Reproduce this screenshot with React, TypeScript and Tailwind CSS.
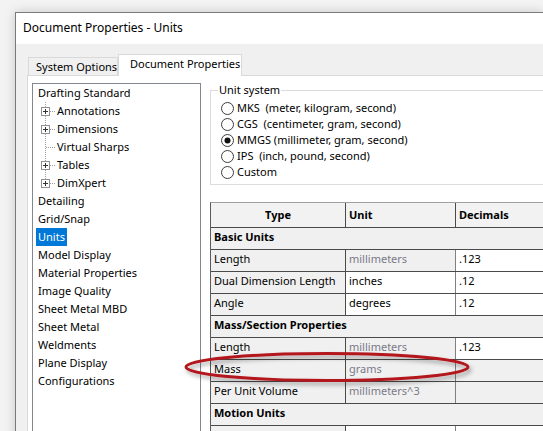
import React from "react";

const font = { fontFamily: '"Noto Sans", "Open Sans", sans-serif' };

type TreeItem = { label: string; sub?: boolean; plus?: boolean; last?: boolean; selected?: boolean };

const tree: TreeItem[] = [
  { label: "Drafting Standard" },
  { label: "Annotations", sub: true, plus: true },
  { label: "Dimensions", sub: true, plus: true },
  { label: "Virtual Sharps", sub: true },
  { label: "Tables", sub: true, plus: true },
  { label: "DimXpert", sub: true, plus: true, last: true },
  { label: "Detailing" },
  { label: "Grid/Snap" },
  { label: "Units", selected: true },
  { label: "Model Display" },
  { label: "Material Properties" },
  { label: "Image Quality" },
  { label: "Sheet Metal MBD" },
  { label: "Sheet Metal" },
  { label: "Weldments" },
  { label: "Plane Display" },
  { label: "Configurations" },
];

function TreeConnector({ plus, last }: { plus?: boolean; last?: boolean }) {
  return (
    <svg width="16" height="18" viewBox="0 0 16 18" className="shrink-0">
      <line x1="4.5" y1="0" x2="4.5" y2={last ? 9 : 18} stroke="#a0a0a0" strokeDasharray="1 1" />
      <line x1="5" y1="9.5" x2="14" y2="9.5" stroke="#a0a0a0" strokeDasharray="1 1" />
      {plus && (
        <g>
          <rect x="0.5" y="5.5" width="8" height="8" fill="#fff" stroke="#919191" />
          <line x1="2" y1="9.5" x2="7" y2="9.5" stroke="#333" />
          <line x1="4.5" y1="7" x2="4.5" y2="12" stroke="#333" />
        </g>
      )}
    </svg>
  );
}

function Radio({ checked, label }: { checked?: boolean; label: string }) {
  return (
    <div className="flex h-[16px] items-center">
      <svg width="13" height="13" viewBox="0 0 13 13" className="mr-[3px] shrink-0">
        <circle cx="6.5" cy="6.5" r="6" fill="#fff" stroke="#3c3c3c" />
        {checked && <circle cx="6.5" cy="6.5" r="3" fill="#111" />}
      </svg>
      <span className="whitespace-pre">{label}</span>
    </div>
  );
}

type Row =
  | { kind: "section"; label: string }
  | { kind: "data"; type: string; unit: string; dec: string; unitGray?: boolean; decGray?: boolean };

const rows: Row[] = [
  { kind: "section", label: "Basic Units" },
  { kind: "data", type: "Length", unit: "millimeters", dec: ".123", unitGray: true },
  { kind: "data", type: "Dual Dimension Length", unit: "inches", dec: ".12" },
  { kind: "data", type: "Angle", unit: "degrees", dec: ".12" },
  { kind: "section", label: "Mass/Section Properties" },
  { kind: "data", type: "Length", unit: "millimeters", dec: ".123", unitGray: true },
  { kind: "data", type: "Mass", unit: "grams", dec: "", unitGray: true, decGray: true },
  { kind: "data", type: "Per Unit Volume", unit: "millimeters^3", dec: "", unitGray: true, decGray: true },
  { kind: "section", label: "Motion Units" },
  { kind: "data", type: "Time", unit: "seconds", dec: ".12" },
];

export default function App() {
  return (
    <div
      className="relative h-[431px] w-[543px] overflow-hidden bg-[#f3f3f3] text-[11px] text-black"
      style={font}
    >
      <div className="ml-[15px] mt-[12px] flex h-[431px] flex-col border-l border-t border-[#7a7a7a] bg-white shadow-[0_0_10px_rgba(0,0,0,0.18)]">
        <div className="flex h-[31px] shrink-0 items-center pb-[1px] pl-[7px] text-[12px]">Document Properties - Units</div>
        <div className="flex-1 bg-[#f0f0f0] pl-[11px] pt-[10px]">
          <div className="flex items-end pl-[1px]">
            <div className="flex h-[18px] w-[90px] items-center whitespace-nowrap border border-b-0 border-[#d9d9d9] bg-[#f0f0f0] pl-[7px] pt-[1px]">
              System Options
            </div>
            <div className="relative z-10 -mb-px flex h-[22px] w-[124px] items-center whitespace-nowrap border border-b-0 border-[#d9d9d9] bg-white pb-[2px] pl-[11px]">
              Document Properties
            </div>
          </div>
          <div className="flex h-[400px] border-l border-t border-[#d9d9d9] bg-white pl-[4px] pt-[7px]">
            <div className="h-[400px] w-[169px] shrink-0 border border-[#828790] bg-white pl-[3px]">
              {tree.map((t, i) =>
                t.sub ? (
                  <div key={i} className="flex h-[18px] items-center pl-[5px]">
                    <TreeConnector plus={t.plus} last={t.last} />
                    <span className="whitespace-nowrap">{t.label}</span>
                  </div>
                ) : (
                  <div key={i} className="flex h-[18px] items-center">
                    <span
                      className={
                        t.selected
                          ? "flex h-[18px] items-center bg-[#0078d7] px-[2px] text-white"
                          : "whitespace-nowrap px-[2px]"
                      }
                    >
                      {t.label}
                    </span>
                  </div>
                )
              )}
            </div>
            <div className="ml-[9px] flex flex-1 flex-col">
              <fieldset className="mt-[-1px] h-[103px] border border-[#dcdcdc] px-[7px]">
                <legend className="px-[1px] leading-[16px]">Unit system</legend>
                <div className="ml-[3px] mt-[2px] flex flex-col">
                  <Radio label="MKS  (meter, kilogram, second)" />
                  <Radio label="CGS  (centimeter, gram, second)" />
                  <Radio checked label="MMGS (millimeter, gram, second)" />
                  <Radio label="IPS  (inch, pound, second)" />
                  <Radio label="Custom" />
                </div>
              </fieldset>
              <div className="mt-[17px] w-[400px] border-l border-t border-l-[#5a5a5a] border-t-[#a0a0a0]">
                <div className="grid h-[25px] grid-cols-[135px_110px_1fr] border-b border-[#4a4a4a] bg-[#f2f2f2] font-bold">
                  <div className="flex items-center justify-center border-r border-[#4a4a4a]">Type</div>
                  <div className="flex items-center border-r border-[#4a4a4a] pl-[3px]">Unit</div>
                  <div className="flex items-center pl-[3px]">Decimals</div>
                </div>
                {rows.map((r, i) =>
                  r.kind === "section" ? (
                    <div key={i} className="flex h-[22px] items-center border-b border-[#4a4a4a] bg-[#f0f0f0] pb-[3px] pl-[3px] font-bold">
                      {r.label}
                    </div>
                  ) : (
                    <div key={i} className="grid h-[22px] grid-cols-[135px_110px_1fr] border-b border-[#4a4a4a]">
                      <div className="flex items-center whitespace-nowrap border-r border-[#4a4a4a] bg-[#f0f0f0] pb-[3px] pl-[3px]">
                        {r.type}
                      </div>
                      <div
                        className={
                          r.unitGray
                            ? "flex items-center border-r border-[#808080] bg-[#f0f0f0] pb-[3px] pl-[3px] text-[#7a7a88]"
                            : "flex items-center border-r border-[#808080] bg-white pb-[3px] pl-[3px]"
                        }
                      >
                        {r.unit}
                      </div>
                      <div
                        className={
                          r.decGray
                            ? "flex items-center bg-[#f0f0f0] pb-[3px] pl-[3px]"
                            : "flex items-center bg-white pb-[3px] pl-[3px]"
                        }
                      >
                        {r.dec}
                      </div>
                    </div>
                  )
                )}
              </div>
            </div>
          </div>
        </div>
      </div>
      <svg className="pointer-events-none absolute left-0 top-0" width="543" height="431" viewBox="0 0 543 431">
        <defs>
          <filter id="sh" x="-10%" y="-50%" width="120%" height="200%">
            <feDropShadow dx="2" dy="3" stdDeviation="2" floodColor="#000" floodOpacity="0.35" />
          </filter>
        </defs>
        <ellipse cx="327" cy="367" rx="141" ry="13.5" fill="none" stroke="#b3161b" strokeWidth="3" filter="url(#sh)" />
      </svg>
    </div>
  );
}
